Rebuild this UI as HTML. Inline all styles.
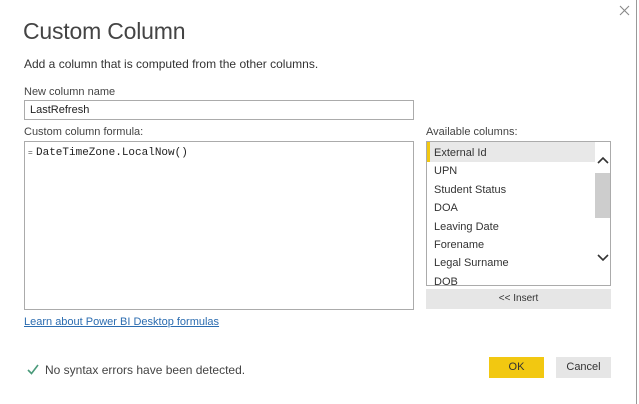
<!DOCTYPE html>
<html><head><meta charset="utf-8"><style>
*{margin:0;padding:0;box-sizing:border-box}
body{width:639px;height:404px;background:#fff;position:relative;overflow:hidden;font-family:"Liberation Sans",sans-serif;color:#333}
.a{position:absolute;white-space:nowrap}
.box{position:absolute;border:1px solid #ababab;background:#fff}
.it{position:absolute;left:7px;font-size:11px;color:#333}
</style></head><body>
<div class="a" style="left:636px;top:0;width:1px;height:404px;background:#999"></div>
<svg class="a" style="left:619px;top:5px" width="11" height="11"><path d="M1 1L10 10M10 1L1 10" stroke="#888" stroke-width="1.1"/></svg>
<div class="a" style="left:23px;top:18px;font-size:23px;color:#444;letter-spacing:-0.2px">Custom Column</div>
<div class="a" style="left:24px;top:57px;font-size:12px;color:#333">Add a column that is computed from the other columns.</div>
<div class="a" style="left:24px;top:86px;font-size:11px;color:#444">New column name</div>
<div class="box" style="left:24px;top:100px;width:390px;height:20px"></div>
<div class="a" style="left:30px;top:104px;font-size:11px;color:#222">LastRefresh</div>
<div class="a" style="left:24px;top:126px;font-size:11px;color:#444">Custom column formula:</div>
<div class="box" style="left:24px;top:141px;width:390px;height:169px"></div>
<div class="a" style="left:28px;top:148px;font-size:8px;color:#555">=</div>
<div class="a" style="left:36px;top:147px;font-family:'Liberation Mono',monospace;font-size:11px;color:#222">DateTimeZone.LocalNow()</div>
<div class="a" style="left:426px;top:126px;font-size:11px;color:#444">Available columns:</div>
<div class="box" style="left:426px;top:141px;width:185px;height:145px;overflow:hidden">
<div class="a" style="left:0;top:0;width:168px;height:20px;background:#e8e8e8;border-left:3px solid #f2c811"></div>
<div class="it" style="top:5px">External Id</div>
<div class="it" style="top:23px">UPN</div>
<div class="it" style="top:42px">Student Status</div>
<div class="it" style="top:60px">DOA</div>
<div class="it" style="top:79px">Leaving Date</div>
<div class="it" style="top:97px">Forename</div>
<div class="it" style="top:115px">Legal Surname</div>
<div class="it" style="top:134px">DOB</div>
<div class="a" style="left:168px;top:31px;width:15px;height:45px;background:#cdcdcd"></div>
<svg class="a" style="left:170px;top:14px" width="12" height="8"><path d="M1 7L6 2L11 7" stroke="#333" stroke-width="1.6" fill="none"/></svg>
<svg class="a" style="left:170px;top:112px" width="12" height="8"><path d="M1 1L6 6L11 1" stroke="#333" stroke-width="1.6" fill="none"/></svg>
</div>
<div class="a" style="left:426px;top:289px;width:185px;height:20px;background:#e6e6e6;font-size:10px;text-align:center;line-height:20px;color:#333">&lt;&lt; Insert</div>
<div class="a" style="left:24px;top:316px;font-size:11px;color:#2b6cb0;text-decoration:underline">Learn about Power BI Desktop formulas</div>
<svg class="a" style="left:27px;top:364px" width="12" height="11"><path d="M1 6L4.5 9.5L11 1" stroke="#4a9a7a" stroke-width="1.6" fill="none"/></svg>
<div class="a" style="left:45px;top:363px;font-size:12px;color:#444">No syntax errors have been detected.</div>
<div class="a" style="left:489px;top:357px;width:55px;height:21px;background:#f2c811;font-size:11px;text-align:center;line-height:21px;color:#333">OK</div>
<div class="a" style="left:556px;top:357px;width:55px;height:21px;background:#e6e6e6;font-size:11px;text-align:center;line-height:21px;color:#333">Cancel</div>
</body></html>
